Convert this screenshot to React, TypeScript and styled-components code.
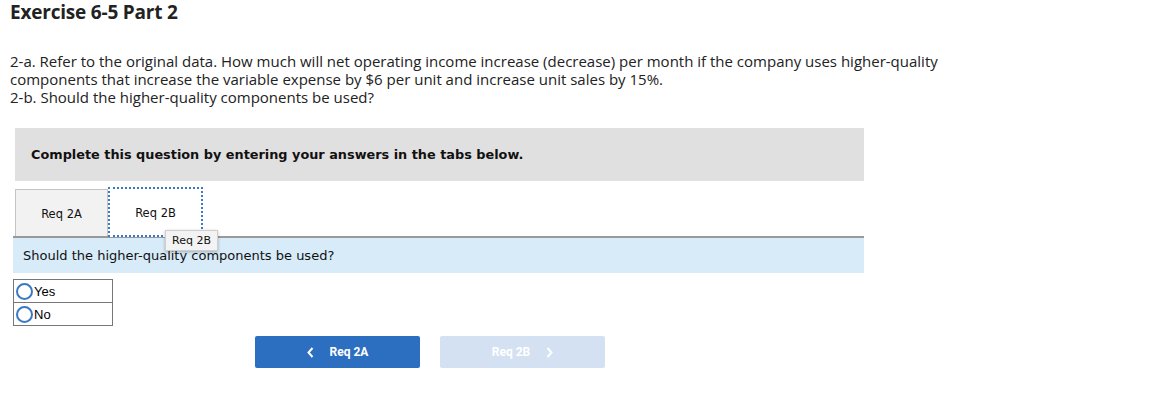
import React, { FC, useState } from "react";
import styled, { createGlobalStyle } from "styled-components";

const GlobalStyle = createGlobalStyle`
  body {
    margin: 0;
    background: #ffffff;
    color: #222222;
  }
`;

const Page = styled.div`
  padding: 0 10px;
  font-family: "Open Sans", Lato, Arial, sans-serif;
`;

const Title = styled.h1`
  margin: 0;
  padding-top: 1px;
  font-size: 19px;
  line-height: 22px;
  font-weight: 700;
  letter-spacing: -0.2px;
  color: #222222;
`;

const Prompt = styled.p`
  margin: 29px 0 0;
  font-size: 15px;
  line-height: 18px;
  color: #222222;
`;

const Question = styled.div`
  width: 849px;
  margin: 22px 0 0 5px;
`;

const Banner = styled.div`
  height: 53px;
  background: #e0e0e0;
  display: flex;
  align-items: center;
  padding-left: 16px;
  font-family: "DejaVu Sans", Verdana, sans-serif;
  font-weight: 700;
  font-size: 12.85px;
  color: #111111;
`;

const TabRow = styled.div`
  display: flex;
  align-items: flex-end;
  margin-top: 6px;
`;

interface TabProps {
  active?: boolean;
}

const Tab = styled.div<TabProps>`
  position: relative;
  box-sizing: border-box;
  display: flex;
  align-items: center;
  justify-content: center;
  padding-top: 1px;
  font-family: "DejaVu Sans", Verdana, sans-serif;
  font-size: 11.5px;
  color: #111111;
  cursor: pointer;
  width: ${(p) => (p.active ? "95px" : "93px")};
  height: ${(p) => (p.active ? "50px" : "47px")};
  background: ${(p) => (p.active ? "#ffffff" : "#f2f2f2")};
  border: ${(p) => (p.active ? "2px dotted #3b78c8" : "1px solid #c4c4c4")};
  border-bottom: ${(p) => (p.active ? "2px dotted #3b78c8" : "none")};
  margin-bottom: ${(p) => (p.active ? "-1px" : "0")};
  z-index: ${(p) => (p.active ? 1 : 0)};
`;

const Tip = styled.div`
  position: absolute;
  left: 55px;
  top: 41px;
  padding: 3px 6px;
  background: #f3f3f3;
  border: 1px solid #cfcfcf;
  box-shadow: 0 1px 3px rgba(0, 0, 0, 0.25);
  font-family: "DejaVu Sans", Verdana, sans-serif;
  font-size: 11px;
  line-height: 13px;
  color: #111111;
  white-space: nowrap;
  z-index: 2;
`;

const AnswerBand = styled.div`
  box-sizing: border-box;
  margin-left: -2px;
  width: 851px;
  height: 37px;
  background: #d7ebf9;
  border-top: 2px solid #999999;
  display: flex;
  align-items: center;
  padding-left: 10px;
  font-family: "DejaVu Sans", Verdana, sans-serif;
  font-size: 13px;
  color: #111111;
`;

const Choices = styled.div`
  margin: 6px 0 0 -2px;
  width: 100px;
  border: 1px solid #777777;
  box-sizing: border-box;
`;

const Choice = styled.label`
  display: flex;
  align-items: center;
  height: 22px;
  font-family: "Liberation Sans", Arial, sans-serif;
  font-size: 13px;
  color: #000000;
  cursor: pointer;
  & + & {
    border-top: 1px solid #777777;
  }
`;

const Circle = styled.span<{ checked: boolean }>`
  box-sizing: border-box;
  width: 17px;
  height: 17px;
  margin: 0 1px 0 2px;
  border-radius: 50%;
  border: 2px solid #3a78c6;
  background: ${(p) => (p.checked ? "radial-gradient(#3a78c6 35%, #fff 40%)" : "#fff")};
`;

const NavRow = styled.div`
  display: flex;
  gap: 20px;
  margin: 10px 0 0 240px;
`;

const NavButton = styled.button<{ disabled?: boolean }>`
  width: 165px;
  height: 32px;
  border: none;
  border-radius: 2px;
  display: flex;
  align-items: center;
  justify-content: center;
  gap: 16px;
  font-family: Roboto, Arial, sans-serif;
  font-weight: 700;
  font-size: 12px;
  color: #ffffff;
  background: ${(p) => (p.disabled ? "#d4e1f3" : "#2c6fc1")};
  cursor: ${(p) => (p.disabled ? "default" : "pointer")};
  svg {
    display: block;
  }
`;

const Chevron: FC<{ dir: "left" | "right" }> = ({ dir }) => (
  <svg width="7" height="11" viewBox="0 0 7 11">
    <path
      d={dir === "left" ? "M5.5 1 L1.5 5.5 L5.5 10" : "M1.5 1 L5.5 5.5 L1.5 10"}
      fill="none"
      stroke="#ffffff"
      strokeWidth="2"
    />
  </svg>
);

const App: FC = () => {
  const [answer, setAnswer] = useState<string>("");

  return (
    <Page>
      <GlobalStyle />
      <Title>Exercise 6-5 Part 2</Title>
      <Prompt>
        2-a. Refer to the original data. How much will net operating income increase (decrease) per
        month if the company uses higher-quality
        <br />
        components that increase the variable expense by $6 per unit and increase unit sales by 15%.
        <br />
        2-b. Should the higher-quality components be used?
      </Prompt>

      <Question>
        <Banner>Complete this question by entering your answers in the tabs below.</Banner>

        <TabRow>
          <Tab>Req 2A</Tab>
          <Tab active>
            Req 2B
            <Tip>Req 2B</Tip>
          </Tab>
        </TabRow>

        <AnswerBand>Should the higher-quality components be used?</AnswerBand>

        <Choices>
          {["Yes", "No"].map((opt) => (
            <Choice key={opt} onClick={() => setAnswer(opt)}>
              <Circle checked={answer === opt} />
              {opt}
            </Choice>
          ))}
        </Choices>

        <NavRow>
          <NavButton>
            <Chevron dir="left" />
            Req 2A
          </NavButton>
          <NavButton disabled>
            Req 2B
            <Chevron dir="right" />
          </NavButton>
        </NavRow>
      </Question>
    </Page>
  );
};

export default App;
